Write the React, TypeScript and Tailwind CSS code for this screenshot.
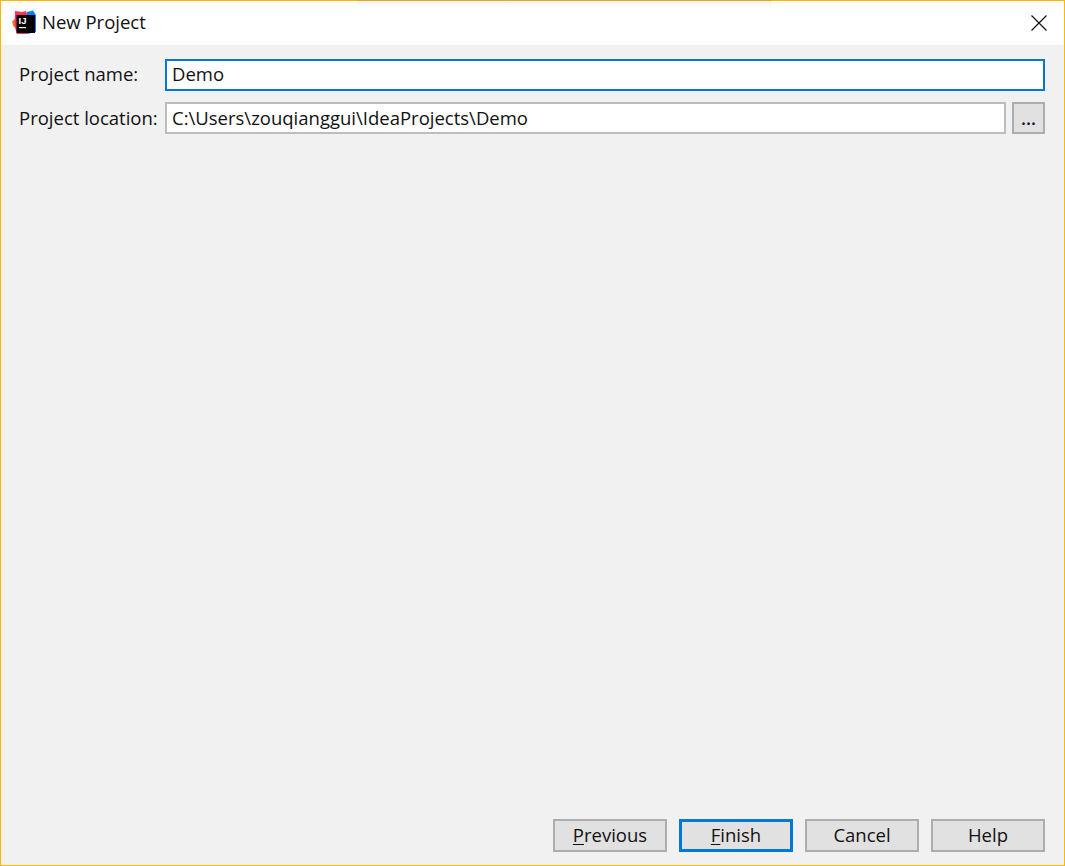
const font = "[font-family:'Open_Sans',sans-serif]";

function Logo() {
  return (
    <svg width="24" height="24" viewBox="0 0 24 24" className="-mt-[3px] shrink-0">
      <path d="M0 11.5 L4 8 L4 18 L1.5 16.5 Z" fill="#f97a12" />
      <path d="M3 1 L10 2 L14 1 L16 6 L16 24 L5 24 L2.5 16 Z" fill="#fe315d" />
      <path d="M15 2 L21 0.5 L24 5 L24 22 L15 24 Z" fill="#087cfa" />
      <rect x="4.5" y="5" width="18.5" height="18" fill="#000" />
      <text x="6.5" y="13.5" fontSize="9.5" fontWeight="700" fill="#fff" fontFamily="'Liberation Sans',sans-serif">IJ</text>
      <rect x="7" y="17" width="7" height="1.2" fill="#fff" />
    </svg>
  );
}

function Btn({ children, primary }: { children: React.ReactNode; primary?: boolean }) {
  return (
    <button
      className={
        primary
          ? `w-[114px] h-[33px] border-[3px] border-[#0078d7] bg-[#e1e1e1] pb-[1px] text-[18.5px] leading-none text-[#111] ${font}`
          : `w-[114px] h-[33px] border-2 border-[#adadad] bg-[#e1e1e1] pb-[1px] text-[18.5px] leading-none text-[#111] ${font}`
      }
    >
      {children}
    </button>
  );
}

export default function App() {
  return (
    <div className={`flex h-[866px] w-[1065px] flex-col border border-[#fdb900] bg-[#f1f1f1] text-[18.5px] text-[#111] ${font}`}>
      <div className="relative flex h-[44px] shrink-0 items-center bg-white pl-[11px] pr-[16px]">
        <div className="absolute -top-[1px] left-[356px] h-[1px] w-[414px] bg-[#e8ab12]" />
        <div className="absolute top-0 left-[356px] h-[5px] w-[414px] bg-gradient-to-b from-[#eceef3] to-white" />
        <Logo />
        <span className="ml-[6px] pb-[3px]">New Project</span>
        <svg width="18" height="18" viewBox="0 0 18 18" className="ml-auto">
          <path d="M1.5 1.5 L16.5 16.5 M16.5 1.5 L1.5 16.5" stroke="#111" strokeWidth="1.2" fill="none" />
        </svg>
      </div>
      <div className="flex flex-1 flex-col pl-[18px] pr-[19px] pt-[14px] pb-[13px]">
        <div className="flex h-[32px] items-center">
          <span className="w-[146px] shrink-0 pb-[2px]">Project name:</span>
          <div className="flex h-[32px] flex-1 items-center border-2 border-[#0078d7] bg-white pb-[2px] pl-[5px]">Demo</div>
        </div>
        <div className="mt-[11px] flex h-[32px] items-center">
          <span className="w-[146px] shrink-0">Project location:</span>
          <div className="flex h-[32px] flex-1 items-center border-2 border-[#bdbdbd] bg-white pl-[5px]">
            C:\Users\zouqianggui\IdeaProjects\Demo
          </div>
          <button className="ml-[6px] flex h-[32px] w-[33px] shrink-0 items-center justify-center border-2 border-[#adadad] bg-[#e1e1e1] text-[18px] font-semibold leading-none">
            ...
          </button>
        </div>
        <div className="mt-auto flex justify-end gap-[12px]">
          <Btn><span className="underline underline-offset-2">P</span>revious</Btn>
          <Btn primary><span className="underline underline-offset-2">F</span>inish</Btn>
          <Btn>Cancel</Btn>
          <Btn>Help</Btn>
        </div>
      </div>
    </div>
  );
}
